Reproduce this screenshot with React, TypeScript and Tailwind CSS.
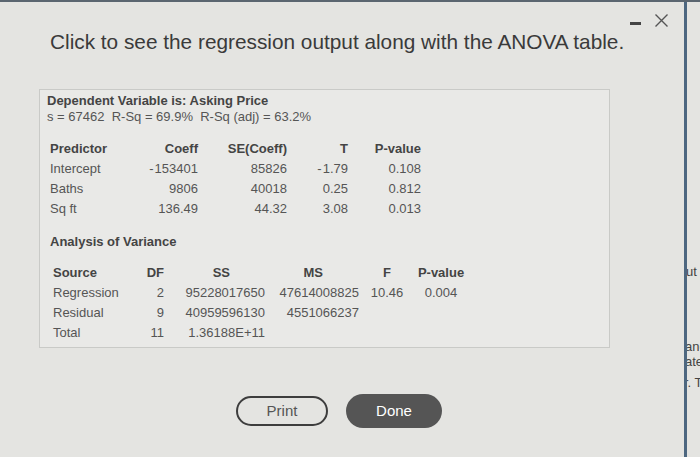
import React from 'react'

const coeffRows = [
  { name: 'Intercept', coeff: '-\u200A153401', se: '85826', t: '-\u200A1.79', p: '0.108' },
  { name: 'Baths', coeff: '9806', se: '40018', t: '0.25', p: '0.812' },
  { name: 'Sq ft', coeff: '136.49', se: '44.32', t: '3.08', p: '0.013' },
]

const anovaRows = [
  { source: 'Regression', df: '2', ss: '95228017650', ms: '47614008825', f: '10.46', p: '0.004' },
  { source: 'Residual', df: '9', ss: '40959596130', ms: '4551066237', f: '', p: '' },
  { source: 'Total', df: '11', ss: '1.36188E+11', ms: '', f: '', p: '' },
]

function CoeffTable() {
  return (
    <div className="mt-[14px] ml-[3px] grid grid-cols-[80px_68px_89px_61px_73px] text-[13px] leading-[20px]">
      <div className="font-bold text-[#444]">Predictor</div>
      <div className="font-bold text-[#444] text-right">Coeff</div>
      <div className="font-bold text-[#444] text-right">SE(Coeff)</div>
      <div className="font-bold text-[#444] text-right">T</div>
      <div className="font-bold text-[#444] text-right">P-value</div>
      {coeffRows.map(r => (
        <React.Fragment key={r.name}>
          <div>{r.name}</div>
          <div className="text-right">{r.coeff}</div>
          <div className="text-right">{r.se}</div>
          <div className="text-right">{r.t}</div>
          <div className="text-right">{r.p}</div>
        </React.Fragment>
      ))}
    </div>
  )
}

function AnovaTable() {
  return (
    <div className="mt-[13px] ml-[6px] grid grid-cols-[82px_29px_101px_94px_56px_52px] text-[13px] leading-[20px]">
      <div className="font-bold text-[#444]">Source</div>
      <div className="font-bold text-[#444] text-right">DF</div>
      <div className="font-bold text-[#444] text-right pr-[35px]">SS</div>
      <div className="font-bold text-[#444] text-right pr-[36px]">MS</div>
      <div className="font-bold text-[#444] text-center">F</div>
      <div className="font-bold text-[#444] text-center">P-value</div>
      {anovaRows.map(r => (
        <React.Fragment key={r.source}>
          <div>{r.source}</div>
          <div className="text-right">{r.df}</div>
          <div className="text-right">{r.ss}</div>
          <div className="text-right">{r.ms}</div>
          <div className="text-center">{r.f}</div>
          <div className="text-center">{r.p}</div>
        </React.Fragment>
      ))}
    </div>
  )
}

export default function App() {
  return (
    <div className="w-[700px] h-[457px] overflow-hidden bg-[#e4e4e1] flex flex-col font-['Liberation_Sans',Arial,sans-serif] text-[#555]">
      <div className="h-[2px] bg-[#5b6670]" />
      <div className="flex flex-1">
        <div className="flex-1 relative">
          <div className="absolute left-[630px] top-[20px] w-[11px] h-[3px] bg-[#444]" />
          <svg className="absolute left-[654px] top-[11px]" width="15" height="15" viewBox="0 0 15 15">
            <path d="M1.5 1.5 L13.5 13.5 M13.5 1.5 L1.5 13.5" stroke="#555" strokeWidth="1.4" fill="none" />
          </svg>

          <h1 className="pl-[50px] pt-[28px] text-[20.8px] leading-[24px] text-[#3a3a3a]">
            Click to see the regression output along with the ANOVA table.
          </h1>

          <div className="ml-[39px] mt-[35px] w-[571px] h-[259px] border border-[#c9cac7] bg-[#e9e9e7] pl-[7px] pt-[3px]">
            <div className="text-[13px] leading-[16px] font-bold text-[#444]">Dependent Variable is: Asking Price</div>
            <div className="text-[13px] leading-[16px]">s = 67462&nbsp; R-Sq = 69.9%&nbsp; R-Sq (adj) = 63.2%</div>

            <CoeffTable />

            <div className="mt-[15px] ml-[3px] text-[13px] leading-[16px] font-bold text-[#444]">Analysis of Variance</div>

            <AnovaTable />
          </div>

          <div className="ml-[236px] mt-[46px] flex items-center gap-[18px]">
            <button className="w-[92px] h-[30px] rounded-full border-2 border-[#3d3d3d] text-[15px] text-[#555]">
              Print
            </button>
            <button className="w-[96px] h-[34px] rounded-full bg-[#555555] text-[15px] text-white">
              Done
            </button>
          </div>
        </div>
        <div className="w-[3px] bg-[#4d6780]" />
        <div className="w-[13px] overflow-hidden pt-[262px] text-[13px] leading-[15px] text-[#444] whitespace-nowrap">
          <div className="-ml-[1px]">ut</div>
          <div className="mt-[60px] -ml-[2px]">anc</div>
          <div className="-ml-[2px]">ate</div>
          <div className="mt-[6px] -ml-[3px]">r. T</div>
        </div>
      </div>
    </div>
  )
}
